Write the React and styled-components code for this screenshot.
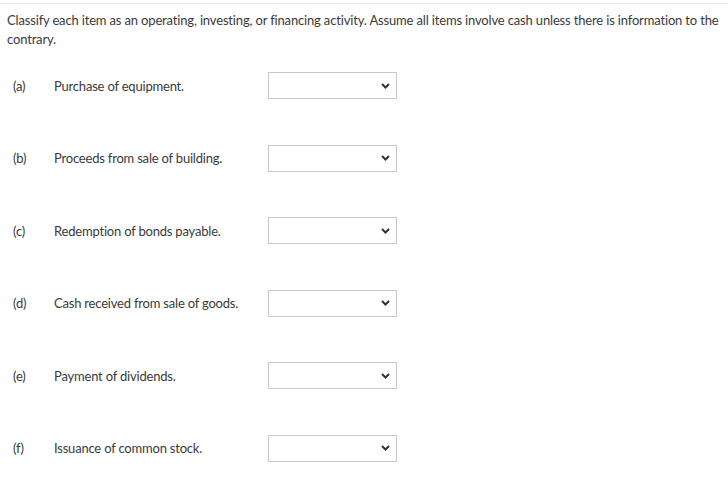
import React from 'react'
import styled, { createGlobalStyle } from 'styled-components'

const Global = createGlobalStyle`
body {
  margin: 0;
  background: #fff;
  font-family: Lato, "Open Sans", sans-serif;
  color: #3a3a3a;
}
`

const Page = styled.div`
border-top: 1px solid #e6e6e6;
margin-top: 3px;
padding: 7px 7px 0 7px;
`

const Intro = styled.p`
margin: 0;
font-size: 13px;
line-height: 19px;
letter-spacing: -0.16px;
`

const List = styled.div`
display: flex;
flex-direction: column;
gap: 45.6px;
margin-top: 23px;
`

const Row = styled.div`
display: flex;
align-items: center;
height: 27px;
font-size: 13px;
letter-spacing: -0.2px;
`

const Letter = styled.span`
width: 41px;
padding-left: 6px;
`

const Desc = styled.span`
width: 214px;
`

const Select = styled.div`
width: 129px;
height: 27px;
box-sizing: border-box;
border: 1px solid #c8c8c8;
display: flex;
align-items: center;
justify-content: flex-end;
padding-right: 6px;
`

const Chevron = () => (
  <svg width="9" height="6" viewBox="0 0 9 6">
    <path d="M1 1 L4.5 4.5 L8 1" fill="none" stroke="#333" strokeWidth="2" />
  </svg>
)

const items = [
  ['(a)', 'Purchase of equipment.'],
  ['(b)', 'Proceeds from sale of building.'],
  ['(c)', 'Redemption of bonds payable.'],
  ['(d)', 'Cash received from sale of goods.'],
  ['(e)', 'Payment of dividends.'],
  ['(f)', 'Issuance of common stock.'],
]

const App = () => {
  return (
    <Page>
      <Global />
      <Intro>
        Classify each item as an operating, investing, or financing activity. Assume all items involve cash unless there is information to the contrary.
      </Intro>
      <List>
        {items.map(([l, d]) => (
          <Row key={l}>
            <Letter>{l}</Letter>
            <Desc>{d}</Desc>
            <Select><Chevron /></Select>
          </Row>
        ))}
      </List>
    </Page>
  )
}

export default App
